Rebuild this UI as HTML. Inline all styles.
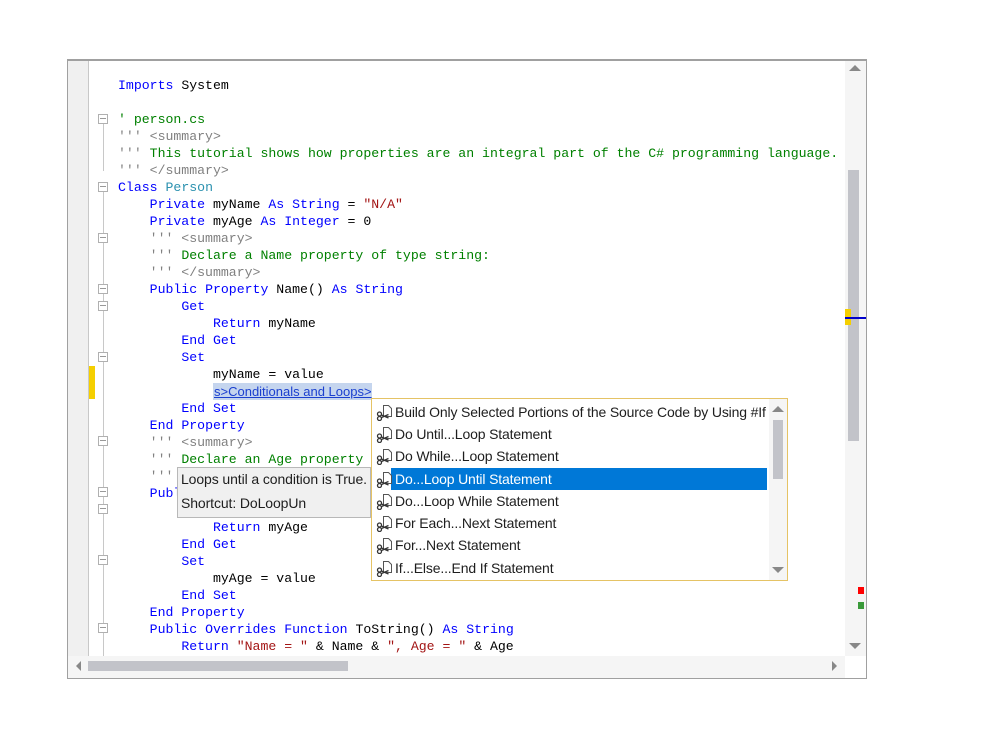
<!DOCTYPE html>
<html><head><meta charset="utf-8"><style>
*{margin:0;padding:0;box-sizing:border-box}
body{width:1000px;height:731px;background:#fff;position:relative;overflow:hidden;font-family:"Liberation Sans",sans-serif}
.frame{position:absolute;left:67px;top:59px;width:800px;height:620px;border:1px solid #a0a0a0;border-top:2px solid #a0a0a0;background:#fff}
.gut{position:absolute;left:68px;top:61px;width:20px;height:595px;background:#f0f0f0}
.gl{position:absolute;left:88px;top:61px;width:1px;height:595px;background:#c8c8c8}
.code{position:absolute;left:0;top:0;width:845px;height:656px;overflow:hidden}
.ln{position:absolute;left:118px;font-family:"Liberation Mono",monospace;font-size:13.2px;white-space:pre;line-height:17px;color:#000}
.k{color:#0000ff}.c{color:#008000}.x{color:#808080}.t{color:#2b91af}.s{color:#a31515}
.ob{position:absolute;left:98px;width:10px;height:10px;border:1px solid #b0b0b0;background:#fff}
.ob:after{content:"";position:absolute;left:1px;top:3px;width:6px;height:1px;background:#999}
.vl{position:absolute;left:103px;width:1px;background:#c8c8c8}
.vs{position:absolute;left:845px;top:61px;width:21px;height:595px;background:#f5f5f5}
.hs{position:absolute;left:68px;top:656px;width:777px;height:22px;background:#f5f5f5}
.list{position:absolute;left:371px;top:398px;width:417px;height:183px;border:1px solid #e5c365;background:#fff}
.it{position:absolute;left:3px;height:22px;width:392px;font-size:14px;line-height:22px;color:#1e1e1e;white-space:nowrap;letter-spacing:-0.15px;overflow:hidden}
.it span{position:absolute;left:20px}
.ic{position:absolute;left:1px;top:3px;width:17px;height:17px;overflow:hidden}
.tip{position:absolute;left:177px;top:467px;width:194px;height:51px;background:#f0f0f0;border:1px solid #b8b8b8;font-size:14px;color:#1e1e1e;white-space:nowrap;letter-spacing:-0.1px}
</style></head><body>
<div class="frame"></div>
<div class="gut"></div><div class="gl"></div>
<div style="position:absolute;left:89px;top:366px;width:6px;height:33px;background:#f5cf00"></div>
<div class="code">
<div class="ln" style="top:77px"><span class="k">Imports</span> System</div>
<div class="ln" style="top:111px"><span class="c">' person.cs</span></div>
<div class="ln" style="top:128px"><span class="x">''' &lt;summary&gt;</span></div>
<div class="ln" style="top:145px"><span class="x">'''</span> <span class="c">This tutorial shows how properties are an integral part of the C# programming language.</span></div>
<div class="ln" style="top:162px"><span class="x">''' &lt;/summary&gt;</span></div>
<div class="ln" style="top:179px"><span class="k">Class</span> <span class="t">Person</span></div>
<div class="ln" style="top:196px">    <span class="k">Private</span> myName <span class="k">As</span> <span class="k">String</span> = <span class="s">"N/A"</span></div>
<div class="ln" style="top:213px">    <span class="k">Private</span> myAge <span class="k">As</span> <span class="k">Integer</span> = 0</div>
<div class="ln" style="top:230px">    <span class="x">''' &lt;summary&gt;</span></div>
<div class="ln" style="top:247px">    <span class="x">'''</span> <span class="c">Declare a Name property of type string:</span></div>
<div class="ln" style="top:264px">    <span class="x">''' &lt;/summary&gt;</span></div>
<div class="ln" style="top:281px">    <span class="k">Public</span> <span class="k">Property</span> Name() <span class="k">As</span> <span class="k">String</span></div>
<div class="ln" style="top:298px">        <span class="k">Get</span></div>
<div class="ln" style="top:315px">            <span class="k">Return</span> myName</div>
<div class="ln" style="top:332px">        <span class="k">End</span> <span class="k">Get</span></div>
<div class="ln" style="top:349px">        <span class="k">Set</span></div>
<div class="ln" style="top:366px">            myName = value</div>
<div style="position:absolute;left:213px;top:383px;width:159px;height:17px;background:#c5d5ee;font-size:13px;line-height:17px;color:#1a3fcf;text-decoration:underline;white-space:nowrap;padding-left:1px;letter-spacing:0px">s&gt;Conditionals and Loops&gt;</div>
<div class="ln" style="top:400px">        <span class="k">End</span> <span class="k">Set</span></div>
<div class="ln" style="top:417px">    <span class="k">End</span> <span class="k">Property</span></div>
<div class="ln" style="top:434px">    <span class="x">''' &lt;summary&gt;</span></div>
<div class="ln" style="top:451px">    <span class="x">'''</span> <span class="c">Declare an Age property of type int:</span></div>
<div class="ln" style="top:468px">    <span class="x">''' &lt;/summary&gt;</span></div>
<div class="ln" style="top:485px">    <span class="k">Public</span> <span class="k">Property</span> Age() <span class="k">As</span> <span class="k">Integer</span></div>
<div class="ln" style="top:502px">        <span class="k">Get</span></div>
<div class="ln" style="top:519px">            <span class="k">Return</span> myAge</div>
<div class="ln" style="top:536px">        <span class="k">End</span> <span class="k">Get</span></div>
<div class="ln" style="top:553px">        <span class="k">Set</span></div>
<div class="ln" style="top:570px">            myAge = value</div>
<div class="ln" style="top:587px">        <span class="k">End</span> <span class="k">Set</span></div>
<div class="ln" style="top:604px">    <span class="k">End</span> <span class="k">Property</span></div>
<div class="ln" style="top:621px">    <span class="k">Public</span> <span class="k">Overrides</span> <span class="k">Function</span> ToString() <span class="k">As</span> <span class="k">String</span></div>
<div class="ln" style="top:638px">        <span class="k">Return</span> <span class="s">"Name = "</span> &amp; Name &amp; <span class="s">", Age = "</span> &amp; Age</div>
<div class="vl" style="top:124px;height:47px"></div>
<div class="vl" style="top:192px;height:464px"></div>
<div class="ob" style="top:114px"></div><div class="ob" style="top:182px"></div><div class="ob" style="top:233px"></div>
<div class="ob" style="top:284px"></div><div class="ob" style="top:301px"></div><div class="ob" style="top:352px"></div>
<div class="ob" style="top:436px"></div><div class="ob" style="top:487px"></div><div class="ob" style="top:504px"></div>
<div class="ob" style="top:555px"></div><div class="ob" style="top:623px"></div>
</div>
<div class="vs"></div>
<div style="position:absolute;left:849px;top:65px;width:0;height:0;border-left:6px solid transparent;border-right:6px solid transparent;border-bottom:6px solid #888"></div>
<div style="position:absolute;left:849px;top:643px;width:0;height:0;border-left:6px solid transparent;border-right:6px solid transparent;border-top:6px solid #888"></div>
<div style="position:absolute;left:848px;top:170px;width:11px;height:271px;background:#c2c3c9"></div>
<div style="position:absolute;left:845px;top:309px;width:6px;height:16px;background:#f5cf00"></div>
<div style="position:absolute;left:845px;top:317px;width:21px;height:2px;background:#0000cc"></div>
<div style="position:absolute;left:858px;top:587px;width:6px;height:7px;background:#f00"></div>
<div style="position:absolute;left:858px;top:602px;width:6px;height:7px;background:#3a9a3a"></div>
<div class="hs"></div>
<div style="position:absolute;left:88px;top:661px;width:260px;height:10px;background:#c2c3c9"></div>
<div style="position:absolute;left:76px;top:661px;width:0;height:0;border-top:5px solid transparent;border-bottom:5px solid transparent;border-right:5px solid #888"></div>
<div style="position:absolute;left:832px;top:661px;width:0;height:0;border-top:5px solid transparent;border-bottom:5px solid transparent;border-left:5px solid #888"></div>

<div class="list">
<div style="position:absolute;left:19px;top:69px;width:376px;height:22px;background:#0078d7"></div>
<div class="it" style="top:2px"><svg class="ic" viewBox="0 0 17 17"><path d="M7.5 1.5h5l3 3v8h-8z" fill="#fff" stroke="#555"/><circle cx="3.5" cy="10" r="2" fill="none" stroke="#333" stroke-width="1.3"/><circle cx="3.5" cy="14.5" r="2" fill="none" stroke="#333" stroke-width="1.3"/><path d="M5.5 11l7 3M5.5 13.5l7-3" stroke="#333" stroke-width="1.3"/></svg><span>Build Only Selected Portions of the Source Code by Using #If</span></div>
<div class="it" style="top:24px"><svg class="ic" viewBox="0 0 17 17"><path d="M7.5 1.5h5l3 3v8h-8z" fill="#fff" stroke="#555"/><circle cx="3.5" cy="10" r="2" fill="none" stroke="#333" stroke-width="1.3"/><circle cx="3.5" cy="14.5" r="2" fill="none" stroke="#333" stroke-width="1.3"/><path d="M5.5 11l7 3M5.5 13.5l7-3" stroke="#333" stroke-width="1.3"/></svg><span>Do Until...Loop Statement</span></div>
<div class="it" style="top:46px"><svg class="ic" viewBox="0 0 17 17"><path d="M7.5 1.5h5l3 3v8h-8z" fill="#fff" stroke="#555"/><circle cx="3.5" cy="10" r="2" fill="none" stroke="#333" stroke-width="1.3"/><circle cx="3.5" cy="14.5" r="2" fill="none" stroke="#333" stroke-width="1.3"/><path d="M5.5 11l7 3M5.5 13.5l7-3" stroke="#333" stroke-width="1.3"/></svg><span>Do While...Loop Statement</span></div>
<div class="it" style="top:69px;color:#fff"><svg class="ic" viewBox="0 0 17 17"><path d="M7.5 1.5h5l3 3v8h-8z" fill="#fff" stroke="#555"/><circle cx="3.5" cy="10" r="2" fill="none" stroke="#333" stroke-width="1.3"/><circle cx="3.5" cy="14.5" r="2" fill="none" stroke="#333" stroke-width="1.3"/><path d="M5.5 11l7 3M5.5 13.5l7-3" stroke="#333" stroke-width="1.3"/></svg><span>Do...Loop Until Statement</span></div>
<div class="it" style="top:91px"><svg class="ic" viewBox="0 0 17 17"><path d="M7.5 1.5h5l3 3v8h-8z" fill="#fff" stroke="#555"/><circle cx="3.5" cy="10" r="2" fill="none" stroke="#333" stroke-width="1.3"/><circle cx="3.5" cy="14.5" r="2" fill="none" stroke="#333" stroke-width="1.3"/><path d="M5.5 11l7 3M5.5 13.5l7-3" stroke="#333" stroke-width="1.3"/></svg><span>Do...Loop While Statement</span></div>
<div class="it" style="top:113px"><svg class="ic" viewBox="0 0 17 17"><path d="M7.5 1.5h5l3 3v8h-8z" fill="#fff" stroke="#555"/><circle cx="3.5" cy="10" r="2" fill="none" stroke="#333" stroke-width="1.3"/><circle cx="3.5" cy="14.5" r="2" fill="none" stroke="#333" stroke-width="1.3"/><path d="M5.5 11l7 3M5.5 13.5l7-3" stroke="#333" stroke-width="1.3"/></svg><span>For Each...Next Statement</span></div>
<div class="it" style="top:135px"><svg class="ic" viewBox="0 0 17 17"><path d="M7.5 1.5h5l3 3v8h-8z" fill="#fff" stroke="#555"/><circle cx="3.5" cy="10" r="2" fill="none" stroke="#333" stroke-width="1.3"/><circle cx="3.5" cy="14.5" r="2" fill="none" stroke="#333" stroke-width="1.3"/><path d="M5.5 11l7 3M5.5 13.5l7-3" stroke="#333" stroke-width="1.3"/></svg><span>For...Next Statement</span></div>
<div class="it" style="top:158px"><svg class="ic" viewBox="0 0 17 17"><path d="M7.5 1.5h5l3 3v8h-8z" fill="#fff" stroke="#555"/><circle cx="3.5" cy="10" r="2" fill="none" stroke="#333" stroke-width="1.3"/><circle cx="3.5" cy="14.5" r="2" fill="none" stroke="#333" stroke-width="1.3"/><path d="M5.5 11l7 3M5.5 13.5l7-3" stroke="#333" stroke-width="1.3"/></svg><span>If...Else...End If Statement</span></div>
<div style="position:absolute;left:397px;top:0;width:18px;height:181px;background:#f5f5f5"></div>
<div style="position:absolute;left:401px;top:21px;width:10px;height:59px;background:#c2c3c9"></div>
<div style="position:absolute;left:400px;top:7px;width:0;height:0;border-left:6px solid transparent;border-right:6px solid transparent;border-bottom:6px solid #888"></div>
<div style="position:absolute;left:400px;top:168px;width:0;height:0;border-left:6px solid transparent;border-right:6px solid transparent;border-top:6px solid #888"></div>
</div>
<div class="tip"><div style="position:absolute;left:3px;top:3px">Loops until a condition is True.</div><div style="position:absolute;left:3px;top:27px">Shortcut: DoLoopUn</div></div>
</body></html>
